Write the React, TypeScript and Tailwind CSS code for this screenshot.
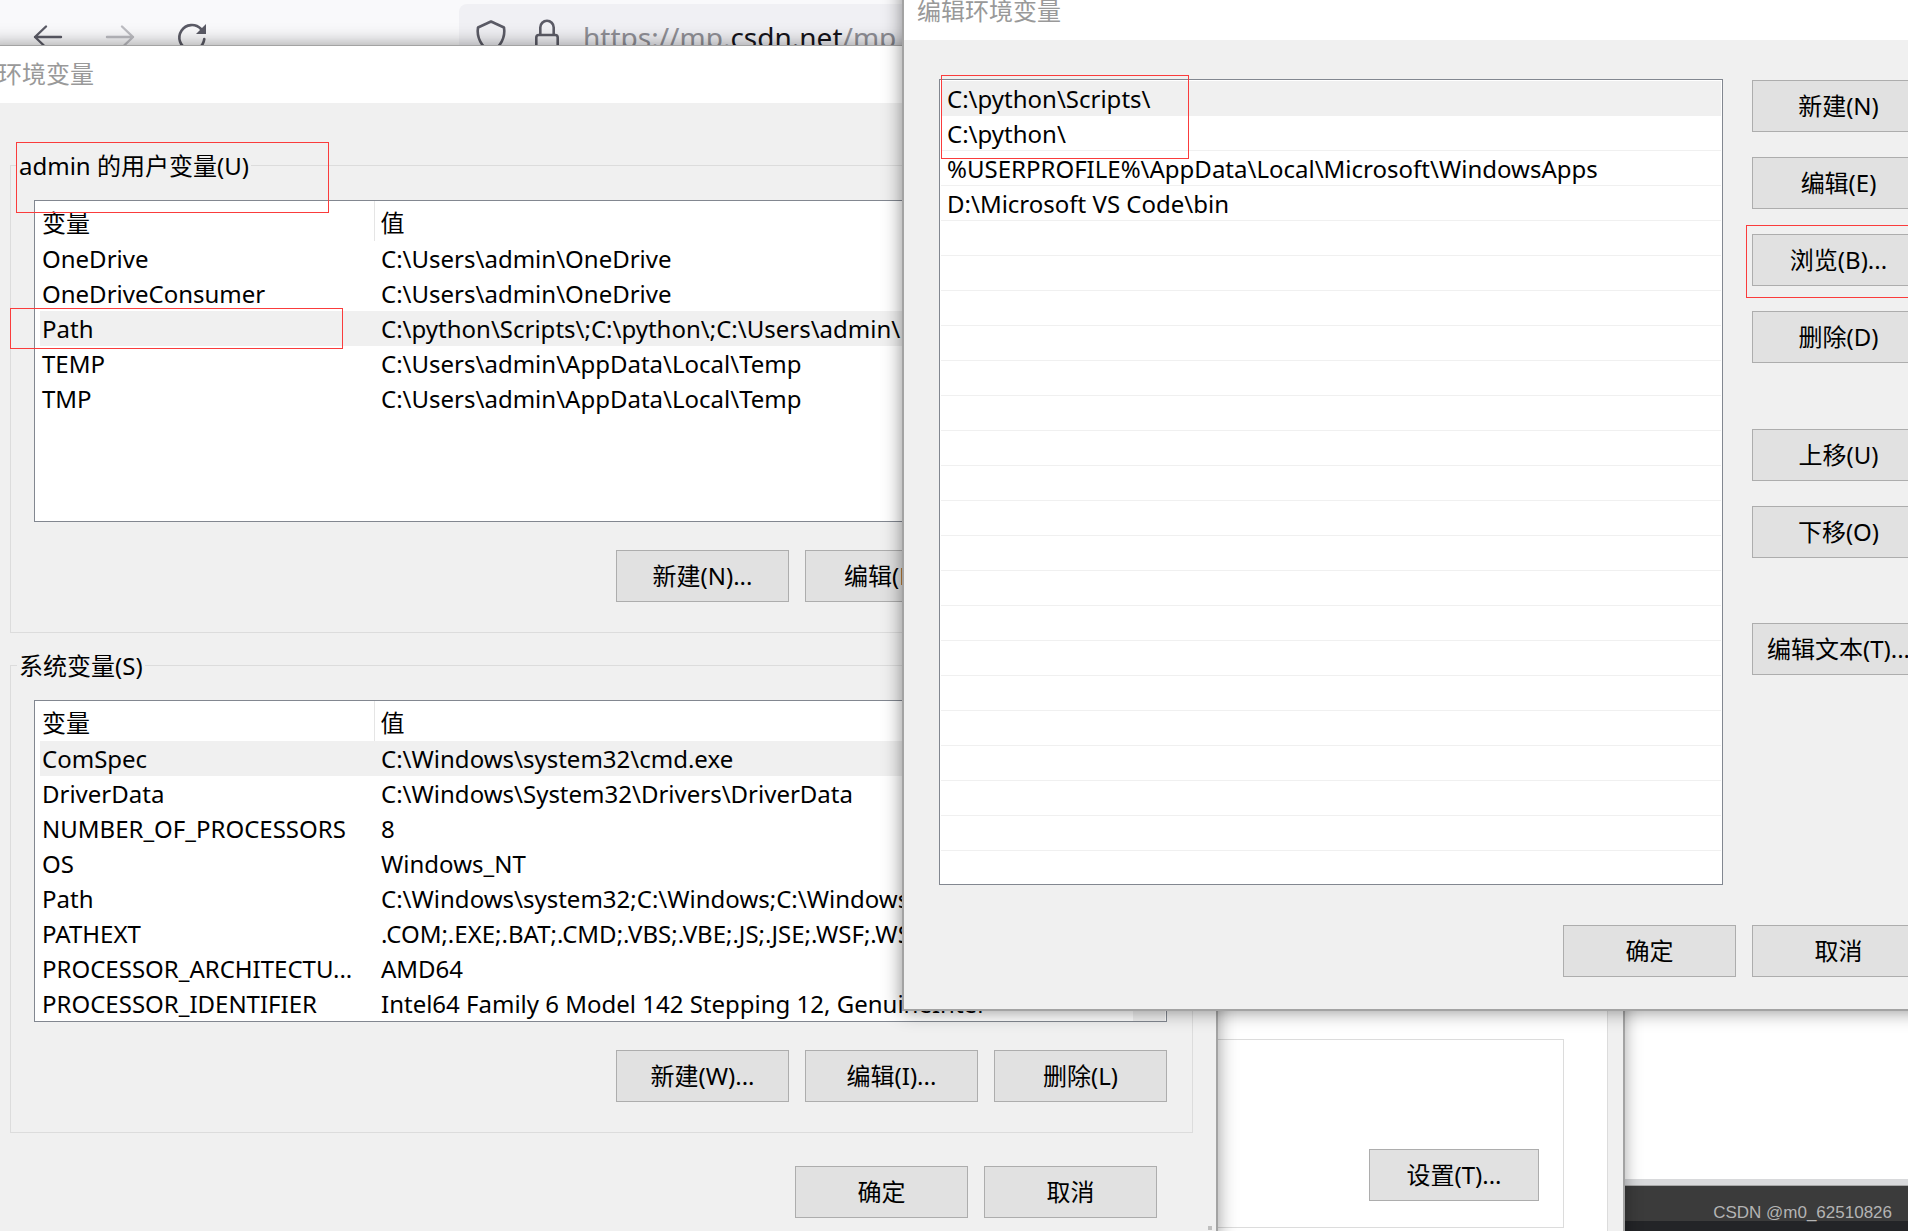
import type { ReactNode } from "react";

type Variable = {
  name: string;
  value: string;
};

const userVariables: Variable[] = [
  { name: "OneDrive", value: "C:\\Users\\admin\\OneDrive" },
  { name: "OneDriveConsumer", value: "C:\\Users\\admin\\OneDrive" },
  { name: "Path", value: "C:\\python\\Scripts\\;C:\\python\\;C:\\Users\\admin\\" },
  { name: "TEMP", value: "C:\\Users\\admin\\AppData\\Local\\Temp" },
  { name: "TMP", value: "C:\\Users\\admin\\AppData\\Local\\Temp" },
];

const systemVariables: Variable[] = [
  { name: "ComSpec", value: "C:\\Windows\\system32\\cmd.exe" },
  { name: "DriverData", value: "C:\\Windows\\System32\\Drivers\\DriverData" },
  { name: "NUMBER_OF_PROCESSORS", value: "8" },
  { name: "OS", value: "Windows_NT" },
  { name: "Path", value: "C:\\Windows\\system32;C:\\Windows;C:\\Windows\\" },
  { name: "PATHEXT", value: ".COM;.EXE;.BAT;.CMD;.VBS;.VBE;.JS;.JSE;.WSF;.WSH" },
  { name: "PROCESSOR_ARCHITECTU...", value: "AMD64" },
  {
    name: "PROCESSOR_IDENTIFIER",
    value: "Intel64 Family 6 Model 142 Stepping 12, GenuineIntel",
  },
];

const pathEntries = [
  "C:\\python\\Scripts\\",
  "C:\\python\\",
  "%USERPROFILE%\\AppData\\Local\\Microsoft\\WindowsApps",
  "D:\\Microsoft VS Code\\bin",
];

const EMPTY_ROWS = 18;

function DialogButton({
  children,
  width = "w-[173px]",
}: {
  children: ReactNode;
  width?: string;
}) {
  return (
    <button
      type="button"
      className={`h-[52px] shrink-0 whitespace-nowrap border border-[#adadad] bg-[#e1e1e1] text-2xl text-black ${width}`}
    >
      {children}
    </button>
  );
}

function VariableGroup({
  title,
  variables,
  selected,
  buttons,
}: {
  title: string;
  variables: Variable[];
  selected: string;
  buttons: string[];
}) {
  return (
    <fieldset className="border border-[#dcdcdc]">
      <legend className="ml-[6px] px-0.5 pt-0.5 text-2xl leading-[30px]">
        {title}
      </legend>
      <div className="pt-[19px] pr-[25px] pb-[30px] pl-[23px]">
        <div className="flex h-[322px] overflow-hidden border border-[#828790] bg-white pl-[5px]">
          <table className="w-full flex-1 table-fixed self-start">
            <thead>
              <tr className="h-10 text-left text-2xl">
                <th className="w-[334px] border-r border-[#e5e5e5] pt-1 pl-0.5 font-normal">
                  变量
                </th>
                <th className="pt-1 pl-[6px] font-normal">值</th>
              </tr>
            </thead>
            <tbody>
              {variables.map((variable) => (
                <tr
                  key={variable.name}
                  className={`h-[35px] whitespace-nowrap text-2xl ${
                    variable.name === selected ? "bg-[#f0f0f0]" : ""
                  }`}
                >
                  <td className="pl-0.5">{variable.name}</td>
                  <td className="pl-[7px]">{variable.value}</td>
                </tr>
              ))}
            </tbody>
          </table>
          {variables.length > 7 && <div className="mr-px w-8 bg-[#f0f0f0]" />}
        </div>
        <div className="mt-7 flex justify-end gap-4">
          {buttons.map((label) => (
            <DialogButton key={label}>{label}</DialogButton>
          ))}
        </div>
      </div>
    </fieldset>
  );
}

function BrowserBar() {
  return (
    <header className="flex h-[70px] items-start bg-[#f9f9fb] pt-1">
      <nav className="flex w-[459px] gap-10 pt-[17px] pl-8">
        <button type="button" aria-label="后退">
          <svg className="size-8" viewBox="0 0 32 32" fill="none" stroke="#5b5b66" strokeWidth="2.4" strokeLinecap="round" strokeLinejoin="round">
            <path d="M29 16H3M14 5.500 3 16l11 10.500" />
          </svg>
        </button>
        <button type="button" aria-label="前进">
          <svg className="size-8" viewBox="0 0 32 32" fill="none" stroke="#bdbdc2" strokeWidth="2.4" strokeLinecap="round" strokeLinejoin="round">
            <path d="M3 16h26M18 5.500 29 16 18 26.500" />
          </svg>
        </button>
        <button type="button" aria-label="刷新">
          <svg className="size-8" viewBox="0 0 32 32" fill="none" stroke="#5b5b66" strokeWidth="2.6" strokeLinecap="round">
            <path d="M25 8A12.500 12.500 0 1 0 28.300 18" />
            <path d="M30 3v10H20z" fill="#5b5b66" stroke="none" />
          </svg>
        </button>
      </nav>
      <div className="flex h-16 flex-1 items-center rounded-lg bg-[#f0f0f4] pl-4">
        <svg className="h-[34px] w-8" viewBox="0 0 32 34" fill="none" stroke="#5b5b66" strokeWidth="2.6" strokeLinejoin="round">
          <path d="M16 2.500 29 8.500c1.500 9-3 20-13 23.500C6 28.500 1.500 17.500 3 8.500z" />
        </svg>
        <svg className="ml-7 h-[34px] w-6" viewBox="0 0 24 34" fill="none" stroke="#5b5b66" strokeWidth="2.6">
          <path d="M5.300 16V8.500a6.700 6.700 0 0 1 13.400 0V16" />
          <rect x="1.300" y="16" width="21.400" height="16.500" rx="2.500" />
        </svg>
        <span className="ml-6 pt-0.5 text-[28px] text-[#8f8f96]">
          https://mp.<span className="text-[#15141a]">csdn.net</span>/mp
        </span>
      </div>
    </header>
  );
}

// 系统属性窗口，大部分被其他窗口挡住
function SystemPropertiesWindow() {
  return (
    <section className="absolute top-[300px] right-[283px] flex h-[1000px] w-[800px] border-r-2 border-[#a3a3a3] bg-[#f0f0f0] pr-[15px] shadow-[0_0_16px_rgba(0,0,0,0.35)]">
      <div className="flex flex-1 flex-col justify-end border-r border-[#dcdcdc] bg-white pr-[43px] pb-[72px]">
        <div className="flex h-[189px] items-end justify-end border border-[#dcdcdc] pr-6 pb-[26px]">
          <DialogButton width="w-[170px]">设置(T)...</DialogButton>
        </div>
      </div>
    </section>
  );
}

function EnvironmentWindow() {
  return (
    <section className="absolute top-[45px] right-[690px] -left-[18px] border-t border-r-2 border-[#a3a3a3] bg-[#f0f0f0] shadow-[0_0_18px_rgba(0,0,0,0.4)]">
      <h1 className="flex h-[57px] items-center bg-white pb-0.5 pl-4 text-2xl text-[#999]">
        环境变量
      </h1>
      <div className="flex flex-col gap-4 pt-[46px] pr-[23px] pl-7">
        <VariableGroup
          title="admin 的用户变量(U)"
          variables={userVariables}
          selected="Path"
          buttons={["新建(N)...", "编辑(E)...", "删除(D)"]}
        />
        <VariableGroup
          title="系统变量(S)"
          variables={systemVariables}
          selected="ComSpec"
          buttons={["新建(W)...", "编辑(I)...", "删除(L)"]}
        />
      </div>
      <div className="flex justify-end gap-4 pt-[33px] pr-[59px]">
        <DialogButton>确定</DialogButton>
        <DialogButton>取消</DialogButton>
      </div>
      <div className="flex h-6 justify-end pt-2 pr-1">
        <span className="size-1 bg-[#bfbfbf]" />
      </div>
    </section>
  );
}

function EditPathWindow() {
  return (
    <section className="absolute -top-[20px] -right-[47px] left-[902px] border-b-2 border-l-2 border-[#a3a3a3] bg-[#f0f0f0] shadow-[0_0_18px_rgba(0,0,0,0.45)]">
      <h2 className="flex h-[60px] items-center bg-white pt-0.5 pl-[13px] text-2xl text-[#999]">
        编辑环境变量
      </h2>
      <div className="flex gap-[29px] pt-[39px] pr-[30px] pl-[35px]">
        <ul className="h-[806px] flex-1 overflow-hidden border border-[#828790] bg-white px-px pt-px text-2xl leading-[36px]">
          {pathEntries.map((entry, index) => (
            <li
              key={entry}
              className={`h-[35px] border-b border-[#f0f0f0] pl-[6px] whitespace-nowrap ${
                index === 0 ? "bg-[#f0f0f0]" : ""
              }`}
            >
              {entry}
            </li>
          ))}
          {Array.from({ length: EMPTY_ROWS }, (_, index) => (
            <li key={index} className="h-[35px] border-b border-[#f0f0f0]" />
          ))}
        </ul>
        <div className="flex flex-col gap-[25px] pt-px">
          <DialogButton>新建(N)</DialogButton>
          <DialogButton>编辑(E)</DialogButton>
          <DialogButton>浏览(B)...</DialogButton>
          <DialogButton>删除(D)</DialogButton>
          <div className="mt-[41px] flex flex-col gap-[25px]">
            <DialogButton>上移(U)</DialogButton>
            <DialogButton>下移(O)</DialogButton>
          </div>
          <div className="mt-10">
            <DialogButton>编辑文本(T)...</DialogButton>
          </div>
        </div>
      </div>
      <div className="flex justify-end gap-4 pt-10 pr-[30px] pb-8">
        <DialogButton>确定</DialogButton>
        <DialogButton>取消</DialogButton>
      </div>
    </section>
  );
}

export default function App() {
  return (
    <div className="relative flex h-screen flex-col overflow-hidden bg-white font-['Noto_Sans','Noto_Sans_CJK_SC',sans-serif] text-black">
      <BrowserBar />
      <main className="flex-1" />
      <div className="h-[7px] border-b border-[#a8a8a8] bg-[#d8d9db]" />
      <footer className="flex h-[45px] items-center justify-end border-b-[10px] border-[#232427] bg-[#3b3b3b] pt-[18px] pr-4 font-['Liberation_Sans',sans-serif] text-[17px] text-[#b4b4b4]">
        CSDN @m0_62510826
      </footer>

      <SystemPropertiesWindow />
      <EnvironmentWindow />
      <EditPathWindow />

      {/* 红色标注框 */}
      <div className="absolute top-[142px] left-4 h-[71px] w-[313px] border border-[#fa3c3c]" />
      <div className="absolute top-[308px] left-[10px] h-[41px] w-[333px] border border-[#fa3c3c]" />
      <div className="absolute top-[75px] left-[941px] h-[84px] w-[248px] border border-[#fa3c3c]" />
      <div className="absolute top-[225px] -right-1 h-[73px] w-[166px] border border-[#fa3c3c]" />
    </div>
  );
}
